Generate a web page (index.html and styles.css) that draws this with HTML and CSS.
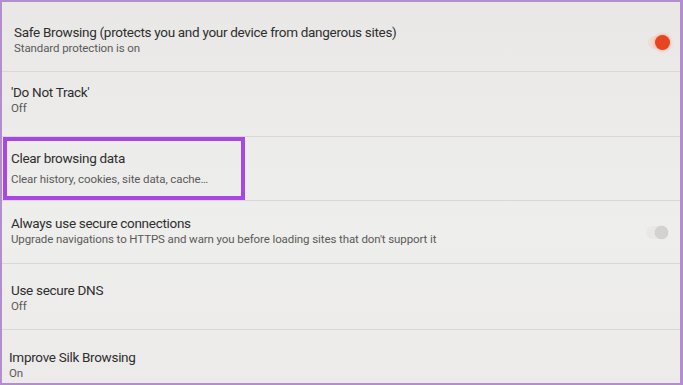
FILE: index.html
```html
<!DOCTYPE html>
<html>
<head>
<meta charset="utf-8">
<link rel="stylesheet" href="styles.css">
</head>
<body>
<div class="screen">
  <div class="row first">
    <div class="text">
      <div class="title">Safe Browsing (protects you and your device from dangerous sites)</div>
      <div class="sub">Standard protection is on</div>
    </div>
    <div class="toggle on"><span class="knob"></span></div>
  </div>
  <div class="row">
    <div class="text">
      <div class="title">'Do Not Track'</div>
      <div class="sub">Off</div>
    </div>
  </div>
  <div class="row hl-row">
    <div class="highlight">
      <div class="title">Clear browsing data</div>
      <div class="sub">Clear history, cookies, site data, cache…</div>
    </div>
  </div>
  <div class="row r4">
    <div class="text">
      <div class="title">Always use secure connections</div>
      <div class="sub">Upgrade navigations to HTTPS and warn you before loading sites that don't support it</div>
    </div>
    <div class="toggle off"><span class="knob"></span></div>
  </div>
  <div class="row r5">
    <div class="text">
      <div class="title">Use secure DNS</div>
      <div class="sub">Off</div>
    </div>
  </div>
  <div class="row last">
    <div class="text">
      <div class="title">Improve Silk Browsing</div>
      <div class="sub">On</div>
    </div>
  </div>
</div>
</body>
</html>
```
FILE: styles.css
```css
html, body {
  margin: 0;
  padding: 0;
  background: #ebeae8;
}
.screen {
  width: 683px;
  height: 385px;
  box-sizing: border-box;
  border: 2px solid #b38dcc;
  border-right-width: 3px;
  background: linear-gradient(180deg, #e9e8e6 0%, #eeeeec 60%, #ecebe9 100%);
  font-family: Roboto, "Liberation Sans", sans-serif;
  overflow: hidden;
  display: flex;
  flex-direction: column;
}
.row {
  height: 65px;
  flex: none;
  box-sizing: border-box;
  border-bottom: 1px solid #d9d8d6;
  display: flex;
  justify-content: space-between;
  align-items: flex-start;
  padding: 12px 11px 0 9px;
}
.row.first {
  height: 70px;
  padding-top: 22px;
  padding-left: 12px;
}
.row.r4 {
  height: 63px;
  padding-top: 14px;
}
.row.r5 {
  height: 66px;
  padding-top: 18px;
}
.row.last {
  border-bottom: none;
  height: auto;
  flex: 1;
  padding-top: 19px;
  padding-left: 7px;
}
.text {
  display: flex;
  flex-direction: column;
}
.title {
  font-size: 13.5px;
  line-height: 16px;
  color: #2e2e2e;
  letter-spacing: -0.3px;
}
.sub {
  font-size: 11.5px;
  line-height: 14px;
  margin-top: 1px;
  color: #5a5a5a;
  letter-spacing: -0.1px;
}
.hl-row {
  height: 64px;
  padding: 0 0 0 1px;
  align-items: stretch;
}
.highlight {
  width: 242px;
  box-sizing: border-box;
  border: 4px solid #a946e6;
  padding: 9px 4px 0 4px;
}
.highlight .sub {
  margin-top: 6px;
}
.toggle {
  align-self: flex-start;
  position: relative;
  width: 22px;
  height: 13px;
  border-radius: 7px;
}
.toggle .knob {
  position: absolute;
  top: -1px;
  width: 15px;
  height: 15px;
  border-radius: 50%;
}
.toggle.on {
  background: #efdcd4;
  margin-top: 12px;
  margin-right: -1px;
}
.toggle.on .knob {
  right: 0;
  background: #e8441f;
  box-shadow: 0 0 3px 1px rgba(240, 120, 80, 0.4);
}
.toggle.off {
  background: #e9e8e6;
  margin-top: 11px;
  margin-right: 1px;
}
.toggle.off .knob {
  right: 0;
  top: 0;
  width: 13px;
  height: 13px;
  background: #d3d2cf;
  box-shadow: 0 0 1px 0 rgba(0, 0, 0, 0.2);
}
```
